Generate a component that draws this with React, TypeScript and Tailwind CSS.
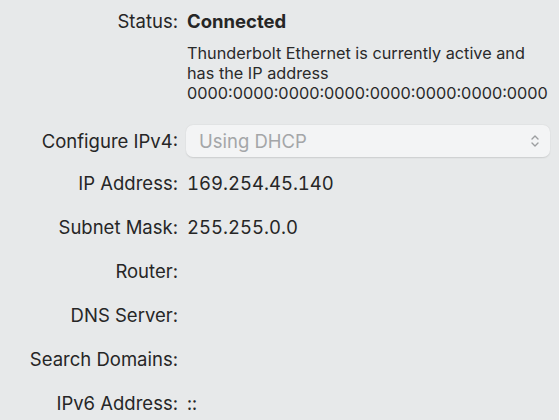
import React from "react";

const font = { fontFamily: 'Inter, "Noto Sans", sans-serif' };

// simple label/value row used below the DHCP select
function Row({ label, value }: { label: string; value?: string }) {
  return (
    <div className="flex h-[44px] items-center">
      <div className="w-[178px] shrink-0 text-right">{label}</div>
      <div className="ml-[9px] tabular-nums">{value}</div>
    </div>
  );
}

export default function App() {
  const rows = [
    { label: "IP Address:", value: "169.254.45.140" },
    { label: "Subnet Mask:", value: "255.255.0.0" },
    { label: "Router:" },
    { label: "DNS Server:" },
    { label: "Search Domains:" },
    { label: "IPv6 Address:", value: "::" },
  ];

  return (
    <div
      className="min-h-screen w-full bg-[#e7e9ea] pt-[9px] text-[18.5px] leading-[24px] text-[#262626]"
      style={font}
    >
      {/* Status */}
      <div className="flex items-center">
        <div className="w-[178px] shrink-0 text-right">Status:</div>
        <div className="ml-[9px] font-bold">Connected</div>
      </div>
      <div className="ml-[187px] mt-[10px] text-[16.25px] leading-[20px] text-[#2a2a2a]">
        <div>Thunderbolt Ethernet is currently active and</div>
        <div>has the IP address</div>
        <div>0000:0000:0000:0000:0000:0000:0000:0000</div>
      </div>

      {/* Configure IPv4 */}
      <div className="mt-[22px] flex items-center">
        <div className="w-[178px] shrink-0 text-right">Configure IPv4:</div>
        <div className="ml-[8px] flex h-[32px] w-[364px] items-center justify-between rounded-[7px] bg-[#f3f4f5] pl-[13px] pr-[10px] shadow-[0_0.5px_1.5px_rgba(0,0,0,0.12)]">
          <span className="text-[#a4a6a8]">Using DHCP</span>
          <svg width="10" height="14" viewBox="0 0 10 14" fill="none" stroke="#9c9ea0" strokeWidth="1.4" strokeLinecap="round" strokeLinejoin="round">
            <path d="M2 5 L5 2 L8 5" />
            <path d="M2 9 L5 12 L8 9" />
          </svg>
        </div>
      </div>

      <div className="mt-[4px]">
        {rows.map((r) => (
          <Row key={r.label} label={r.label} value={r.value} />
        ))}
      </div>
    </div>
  );
}
